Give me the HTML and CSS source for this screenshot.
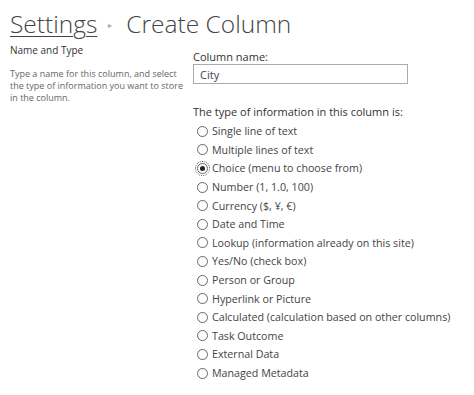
FILE: index.html
```html
<!DOCTYPE html>
<html lang="en">
<head>
    <meta charset="UTF-8">
    <title>Settings - Create Column</title>
    <link rel="stylesheet" href="styles.css">
</head>
<body>
    <h1 class="page-title">
        <a href="#" class="crumb">Settings</a>
        <span class="crumb-sep">&#9656;</span>
        <span>Create Column</span>
    </h1>

    <div class="section">
        <div class="section-info">
            <h3>Name and Type</h3>
            <p>Type a name for this column, and select the type of information you want to store in the column.</p>
        </div>

        <div class="section-body">
            <label class="field-label" for="colName">Column name:</label>
            <input type="text" id="colName" class="text-input" value="City">

            <div class="field-label type-label">The type of information in this column is:</div>
            <div class="radio-list">
                <label class="radio"><span class="dot"></span>Single line of text</label>
                <label class="radio"><span class="dot"></span>Multiple lines of text</label>
                <label class="radio checked"><span class="dot"></span>Choice (menu to choose from)</label>
                <label class="radio"><span class="dot"></span>Number (1, 1.0, 100)</label>
                <label class="radio"><span class="dot"></span>Currency ($, ¥, €)</label>
                <label class="radio"><span class="dot"></span>Date and Time</label>
                <label class="radio"><span class="dot"></span>Lookup (information already on this site)</label>
                <label class="radio"><span class="dot"></span>Yes/No (check box)</label>
                <label class="radio"><span class="dot"></span>Person or Group</label>
                <label class="radio"><span class="dot"></span>Hyperlink or Picture</label>
                <label class="radio"><span class="dot"></span>Calculated (calculation based on other columns)</label>
                <label class="radio"><span class="dot"></span>Task Outcome</label>
                <label class="radio"><span class="dot"></span>External Data</label>
                <label class="radio"><span class="dot"></span>Managed Metadata</label>
            </div>
        </div>
    </div>
</body>
</html>
```

FILE: styles.css
```css
body {
    margin: 0;
    padding: 0 10px;
    font-family: "Open Sans", "Noto Sans", sans-serif;
    color: #444;
    background: #fff;
}
.page-title {
    margin: 0;
    padding-top: 9px;
    height: 30px;
    font-size: 24.5px;
    font-weight: 300;
    line-height: 30px;
    color: #444;
    display: flex;
    align-items: baseline;
}
.crumb {
    color: #444;
    text-decoration: underline;
    text-decoration-thickness: 1px;
    text-underline-offset: 3px;
}
.crumb-sep {
    font-size: 8px;
    line-height: 1;
    color: #aaa;
    margin: 0 14px 0 11px;
    position: relative;
    top: -5px;
}
.section {
    display: flex;
    margin-top: 4px;
}
.section-info {
    width: 178px;
    flex-shrink: 0;
}
.section-info h3 {
    margin: 0;
    font-size: 10px;
    font-weight: 400;
    line-height: 14px;
    color: #333;
}
.section-info p {
    margin: 11px 0 0;
    font-size: 9px;
    line-height: 12px;
    color: #666;
}
.section-body {
    margin-left: 5px;
    padding-top: 7px;
}
.field-label {
    display: block;
    font-size: 11px;
    line-height: 14px;
    color: #333;
}
.text-input {
    display: block;
    box-sizing: border-box;
    width: 215px;
    height: 20px;
    margin-top: 0;
    padding: 0 6px;
    border: 1px solid #ababab;
    font-family: inherit;
    font-size: 11px;
    color: #444;
}
.type-label {
    margin-top: 21px;
}
.radio-list {
    margin-top: 3px;
}
.radio {
    display: flex;
    align-items: center;
    height: 18.6px;
    font-size: 10.7px;
    color: #444;
    white-space: nowrap;
}
.dot {
    box-sizing: border-box;
    width: 11px;
    height: 11px;
    border: 1px solid #666;
    border-radius: 50%;
    margin: 0 4px 0 4px;
    flex-shrink: 0;
    position: relative;
}
.checked .dot::after {
    content: "";
    position: absolute;
    left: 2px;
    top: 2px;
    width: 5px;
    height: 5px;
    border-radius: 50%;
    background: #222;
}
.checked .dot {
    outline: 1px dotted #555;
    outline-offset: 1px;
}
```
